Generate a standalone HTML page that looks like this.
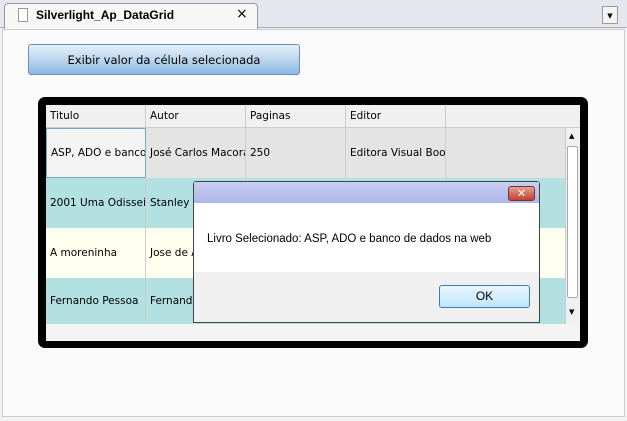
<html><head><style>
body{margin:0;width:627px;height:421px;overflow:hidden;background:#f2f2f2;font-family:"DejaVu Sans","Liberation Sans",sans-serif;font-size:10.5px;color:#000;position:relative}
div{position:absolute;box-sizing:border-box}
.c{white-space:nowrap;overflow:hidden;padding-left:4px;border-right:1px solid #ccc;height:100%;display:flex;align-items:center}
</style></head><body>
<div style="left:0;top:0;width:627px;height:28px;background:#e4e8ee;border-bottom:1px solid #aab"></div>
<div style="left:4px;top:3px;width:254px;height:26px;background:#f7f7f7;border:1px solid #999;border-bottom:none;border-radius:4px 4px 0 0"></div>
<div style="left:18px;top:8px;width:10px;height:14px;border:1px solid #999;background:#fff"></div>
<div style="left:36px;top:8px;font-family:'Liberation Sans',sans-serif;font-weight:bold;font-size:12px">Silverlight_Ap_DataGrid</div>
<div style="left:236px;top:6px;font-size:14px">×</div>
<div style="left:602px;top:6px;width:16px;height:18px;border:1px solid #999;background:#f4f4f4;font-size:7px;text-align:center;line-height:18px">▼</div>
<div style="left:2px;top:29px;width:623px;height:388px;background:#fafafa;border:1px solid #ccc"></div>
<div style="left:28px;top:44px;width:272px;height:31px;border:1px solid #6b8fb5;border-radius:3px;background:linear-gradient(#e6f0fa,#bcd6ee 50%,#8ab8e6);text-align:center;line-height:30px;font-size:11.5px">Exibir valor da célula selecionada</div>
<div style="left:38px;top:97px;width:550px;height:251px;background:#000;border-radius:7px"></div>
<div style="left:46px;top:105px;width:534px;height:236px;background:#f4f4f4"></div>
<div style="left:46px;top:105px;width:534px;height:23px;background:#f0f0f0;display:flex;border-bottom:1px solid #ccc">
<div class="c" style="position:static;width:100px">Titulo</div><div class="c" style="position:static;width:100px">Autor</div><div class="c" style="position:static;width:100px">Paginas</div><div class="c" style="position:static;width:100px">Editor</div></div>
<div style="left:46px;top:128px;width:519px;height:50px;background:#e4e4e4;display:flex"><div class="c" style="position:static;width:100px;background:#f4f4f4;border:1px solid #7ab">ASP, ADO e banco</div><div class="c" style="position:static;width:100px">José Carlos Macoratti</div><div class="c" style="position:static;width:100px">250</div><div class="c" style="position:static;width:100px">Editora Visual Books</div></div>
<div style="left:46px;top:178px;width:519px;height:50px;background:#b3e0e0;display:flex"><div class="c" style="position:static;width:100px">2001 Uma Odisseia</div><div class="c" style="position:static;width:100px">Stanley</div></div>
<div style="left:46px;top:228px;width:519px;height:50px;background:#fffff0;display:flex"><div class="c" style="position:static;width:100px">A moreninha</div><div class="c" style="position:static;width:100px">Jose de Alencar</div></div>
<div style="left:46px;top:278px;width:519px;height:46px;background:#b3e0e0;display:flex"><div class="c" style="position:static;width:100px">Fernando Pessoa</div><div class="c" style="position:static;width:100px">Fernando</div></div>
<div style="left:565px;top:128px;width:15px;height:196px;background:#f0f0f0;border-left:1px solid #ccc"></div>
<div style="left:567px;top:146px;width:11px;height:152px;background:#fff;border:1px solid #aaa;border-radius:2px"></div>
<div style="left:569px;top:132px;font-size:7px">▲</div><div style="left:569px;top:308px;font-size:7px">▼</div>
<div style="left:193px;top:181px;width:347px;height:142px;background:#f0f0f0;border:1px solid #444;border-radius:3px 3px 0 0"></div>
<div style="left:194px;top:182px;width:345px;height:21px;background:linear-gradient(#c8cef0,#aeb6e8)"></div>
<div style="left:508px;top:186px;width:27px;height:15px;background:linear-gradient(#e8a090,#c04030);border:1px solid #733;border-radius:3px;color:#fff;font-size:11px;text-align:center;line-height:13px;font-weight:bold">✕</div>
<div style="left:194px;top:203px;width:345px;height:69px;background:#fff"></div>
<div style="left:207px;top:233px;font-size:11.5px;font-family:'Liberation Sans',sans-serif">Livro Selecionado: ASP, ADO e banco de dados na web</div>
<div style="left:439px;top:285px;width:91px;height:23px;border:1px solid #3c7fb1;border-radius:3px;background:linear-gradient(#eaf6fd,#bee6fd);text-align:center;line-height:21px;font-size:12px;font-family:'Liberation Sans',sans-serif">OK</div>
</body></html>
